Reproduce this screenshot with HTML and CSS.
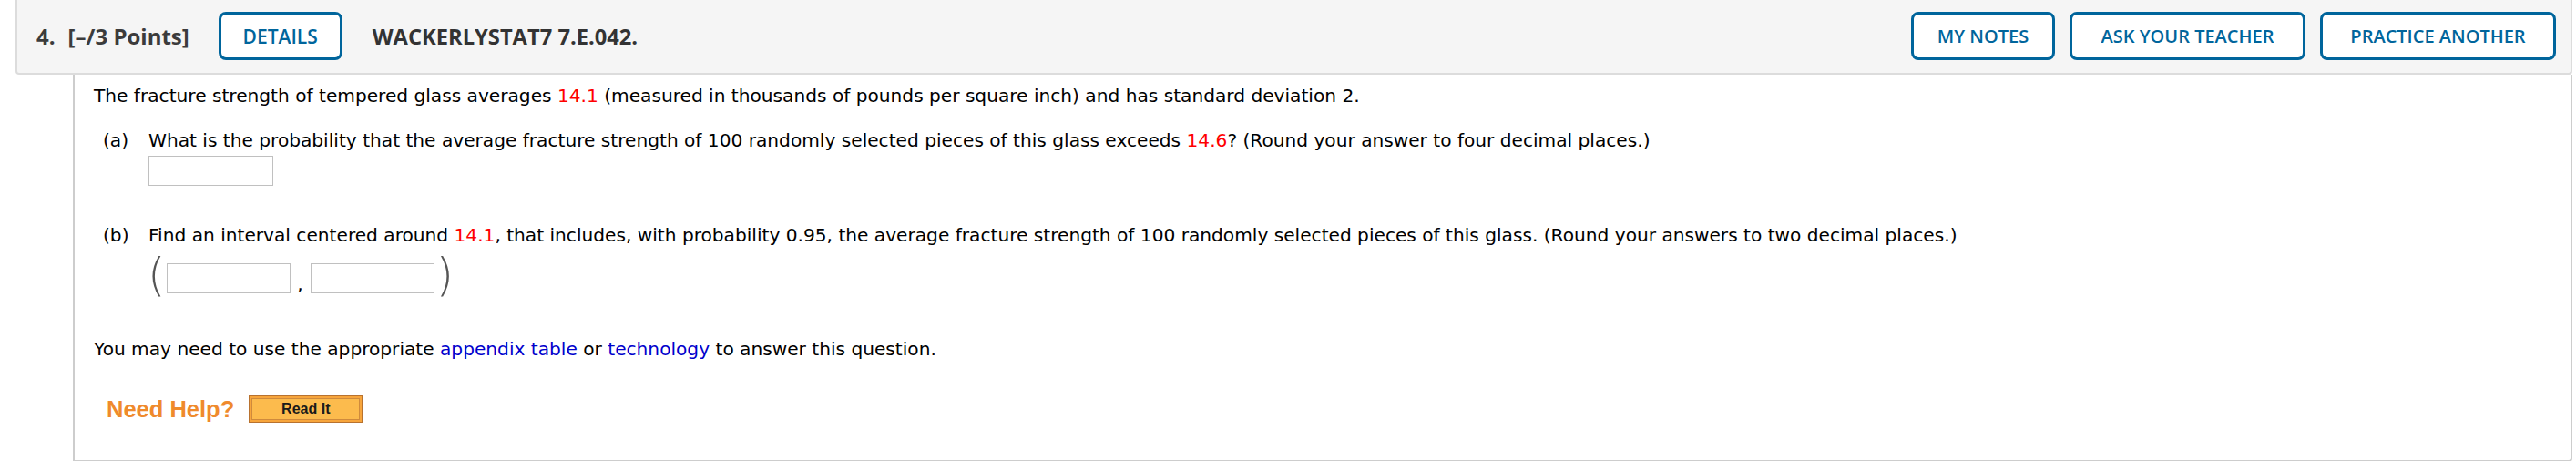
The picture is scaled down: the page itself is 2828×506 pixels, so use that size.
FILE: index.html
```html
<!DOCTYPE html>
<html lang="en">
<head>
  <meta charset="UTF-8">
  <meta name="viewport" content="width=device-width, initial-scale=1.0">
  <title>Question 4</title>
  <link rel="stylesheet" href="styles.css">
</head>
<body>
  <div class="question">
    <!-- Question header -->
    <div class="q-header">
      <div class="q-title">
        <span class="q-num">4.</span>
        <span class="q-points">[–/3 Points]</span>
        <button class="btn-outline btn-details">DETAILS</button>
        <span class="q-code">WACKERLYSTAT7 7.E.042.</span>
      </div>
      <div class="q-actions">
        <button class="btn-outline btn-notes">MY NOTES</button>
        <button class="btn-outline btn-wide">ASK YOUR TEACHER</button>
        <button class="btn-outline btn-wide">PRACTICE ANOTHER</button>
      </div>
    </div>

    <!-- Question body -->
    <div class="q-body">
      <p class="intro">The fracture strength of tempered glass averages <span class="red">14.1</span> (measured in thousands of pounds per square inch) and has standard deviation 2.</p>

      <div class="part part-a">
        <div class="part-label">(a)</div>
        <div class="part-main">
          <p>What is the probability that the average fracture strength of 100 randomly selected pieces of this glass exceeds <span class="red">14.6</span>? (Round your answer to four decimal places.)</p>
          <input type="text" class="answer">
        </div>
      </div>

      <div class="part part-b">
        <div class="part-label">(b)</div>
        <div class="part-main">
          <p>Find an interval centered around <span class="red">14.1</span>, that includes, with probability 0.95, the average fracture strength of 100 randomly selected pieces of this glass. (Round your answers to two decimal places.)</p>
          <div class="interval">
            <span class="paren">(</span>
            <input type="text" class="answer">
            <span class="comma">,</span>
            <input type="text" class="answer">
            <span class="paren">)</span>
          </div>
        </div>
      </div>

      <p class="note">You may need to use the appropriate <a href="#">appendix table</a> or <a href="#">technology</a> to answer this question.</p>

      <div class="help">
        <span class="help-title">Need Help?</span>
        <button class="read-it"><span>Read It</span></button>
      </div>
    </div>
  </div>
</body>
</html>
```

FILE: styles.css
```css
/* General */
body {
  margin: 0;
  font-family: "DejaVu Sans", Verdana, sans-serif;
  background: #fff;
  color: #000;
}

.question {
  padding: 0 4px 0 17px;
}

/* Header */
.q-header {
  display: flex;
  justify-content: space-between;
  align-items: center;
  background: #f5f5f5;
  border: 2px solid #dcdcdc;
  border-top: none;
  border-radius: 0 0 4px 4px;
  padding: 13px 16px 14px 21px;
}

.q-title {
  display: flex;
  align-items: center;
  font-family: "Open Sans", sans-serif;
  font-weight: 700;
  font-size: 24px;
  color: #3b3b3b;
}

.q-num {
  margin-right: 14px;
}

.q-points {
  margin-right: 32px;
}

.q-code {
  margin-left: 33px;
  font-size: 23.7px;
  color: #333;
}

.q-actions {
  display: flex;
  gap: 16px;
}

.btn-outline {
  height: 53px;
  padding: 0 22px;
  background: #fff;
  border: 3px solid #00659c;
  border-radius: 8px;
  color: #00659c;
  font-family: "Open Sans", sans-serif;
  font-weight: 600;
  font-size: 20px;
  cursor: pointer;
}

.btn-details {
  width: 136px;
  font-size: 21px;
  padding: 0;
}

.btn-notes {
  width: 158px;
}

.btn-wide {
  width: 259px;
}

/* Body */
.q-body {
  margin-left: 63px;
  border: 2px solid #cdcdcd;
  border-top: none;
  border-radius: 0 0 4px 0;
  padding: 11px 0 41px 21px;
  font-size: 20.15px;
  line-height: 24px;
}

.q-body p {
  margin: 0;
}

.red {
  color: #f00;
}

.part {
  display: flex;
  padding-left: 10px;
  margin-top: 25px;
}

.part-b {
  margin-top: 42px;
}

.part-label {
  width: 50px;
  flex: none;
}

.answer {
  display: block;
  box-sizing: border-box;
  width: 137px;
  height: 33px;
  margin: 5px 0 0;
  border: 1px solid #c0c0c0;
  background: #fff;
}

.interval {
  display: flex;
  align-items: center;
  height: 45px;
  margin-top: 13px;
}

.interval .answer {
  margin: 0;
  height: 33px;
  width: 136px;
}

.paren {
  font-size: 50px;
  line-height: 45px;
  font-weight: 200;
  color: #555;
  margin: -6px 1px 0 -1px;
}

.interval .paren:last-child {
  margin: -6px 0 0 2px;
}

.comma {
  width: 22px;
  text-align: center;
  align-self: flex-end;
  line-height: 32px;
}

.note {
  margin-top: 43px !important;
}

.q-body a {
  color: #0000cc;
  text-decoration: none;
}

/* Need help */
.help {
  display: flex;
  align-items: center;
  gap: 16px;
  margin: 39px 0 0 14px;
}

.help-title {
  font-family: "Liberation Sans", Arial, sans-serif;
  font-weight: 700;
  font-size: 25.5px;
  color: #ef8a2c;
}

.read-it {
  width: 125px;
  height: 30px;
  padding: 2px;
  background: #f7a53c;
  border: 1px solid #b8722f;
  cursor: pointer;
}

.read-it span {
  display: block;
  height: 100%;
  box-sizing: border-box;
  border: 1px solid #cf8a3c;
  background: #fcbb4d;
  font-family: "Liberation Sans", Arial, sans-serif;
  font-weight: 700;
  font-size: 16px;
  line-height: 22px;
  color: #1a1a1a;
}
```
